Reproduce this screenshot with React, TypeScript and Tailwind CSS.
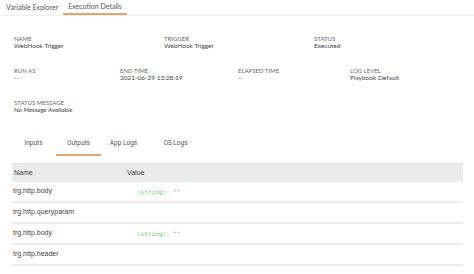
export default function App() {
  const rows: { name: string; str: boolean }[] = [
    { name: "trg.http.body", str: true },
    { name: "trg.http.queryparam", str: false },
    { name: "trg.http.body", str: true },
    { name: "trg.http.header", str: false },
  ];
  const Field = ({ label, value, italic }: { label: string; value: string; italic?: boolean }) => (
    <div className="flex flex-col">
      <div className="text-[6px] leading-[7px] text-[#666] uppercase">{label}</div>
      <div className={`text-[6.5px] leading-[8px] text-[#444] ${italic ? "italic" : ""}`}>{value}</div>
    </div>
  );
  return (
    <div className="w-[474px] h-[274px] bg-white overflow-hidden">
      <div className="flex h-[16px] border-b border-[#eeeeee] font-['Lato',sans-serif] text-[7px] text-[#555]">
        <div className="ml-[1px] px-[5px] flex items-center">Variable Explorer</div>
        <div className="px-[5px] flex items-center border-b-2 border-[#e9a46a]">Execution Details</div>
      </div>

      <div className="mt-[19px] pl-[14px] pr-[10px] font-['Lato',sans-serif] flex flex-col gap-y-[17px]">
        <div className="grid grid-cols-3">
          <Field label="Name" value="WebHook Trigger" />
          <Field label="Trigger" value="WebHook Trigger" />
          <Field label="Status" value="Executed" />
        </div>
        <div className="grid grid-cols-[106px_118px_112px_1fr]">
          <Field label="Run As" value="--" />
          <Field label="End Time" value="2021-06-29 13:28:19" />
          <Field label="Elapsed Time" value="--" />
          <Field label="Log Level" value="Playbook Default" />
        </div>
        <div>
          <Field label="Status Message" value="No Message Available" italic />
        </div>
      </div>

      <div className="mt-[22px] ml-[11px] flex font-['Roboto',sans-serif] text-[6.5px] text-[#555]">
        {["Inputs", "Outputs", "App Logs", "OS Logs"].map((t, i) => (
          <div
            key={t}
            className={`h-[20px] w-[45px] flex items-center justify-center pb-[2px] border-b-2 ${
              i === 1 ? "border-[#e9a46a]" : "border-transparent"
            } ${i === 3 ? "ml-[7px]" : ""}`}
          >
            {t}
          </div>
        ))}
      </div>

      <div className="mt-[7px] mx-[12px] w-[451px] font-['Liberation_Sans',Arial,sans-serif] text-[7px] text-[#444]">
        <div className="flex h-[19px] items-center bg-[#ebebeb] border-t border-[#e0e0e0]">
          <div className="w-[113px] pl-[2px]">Name</div>
          <div className="pl-[2px]">Value</div>
        </div>
        {rows.map((r, i) => (
          <div key={i} className="flex h-[21px] items-center border-b-2 border-[#ededed]">
            <div className="w-[113px] pl-[1px]">{r.name}</div>
            <div className="pl-[12px] font-['DejaVu_Sans_Mono',monospace] text-[6px]">
              {r.str ? (
                <>
                  <span className="text-[#6cbf6c]">(string):</span>
                  <span className="text-[#e86a6a]"> ""</span>
                </>
              ) : null}
            </div>
          </div>
        ))}
      </div>
    </div>
  );
}
